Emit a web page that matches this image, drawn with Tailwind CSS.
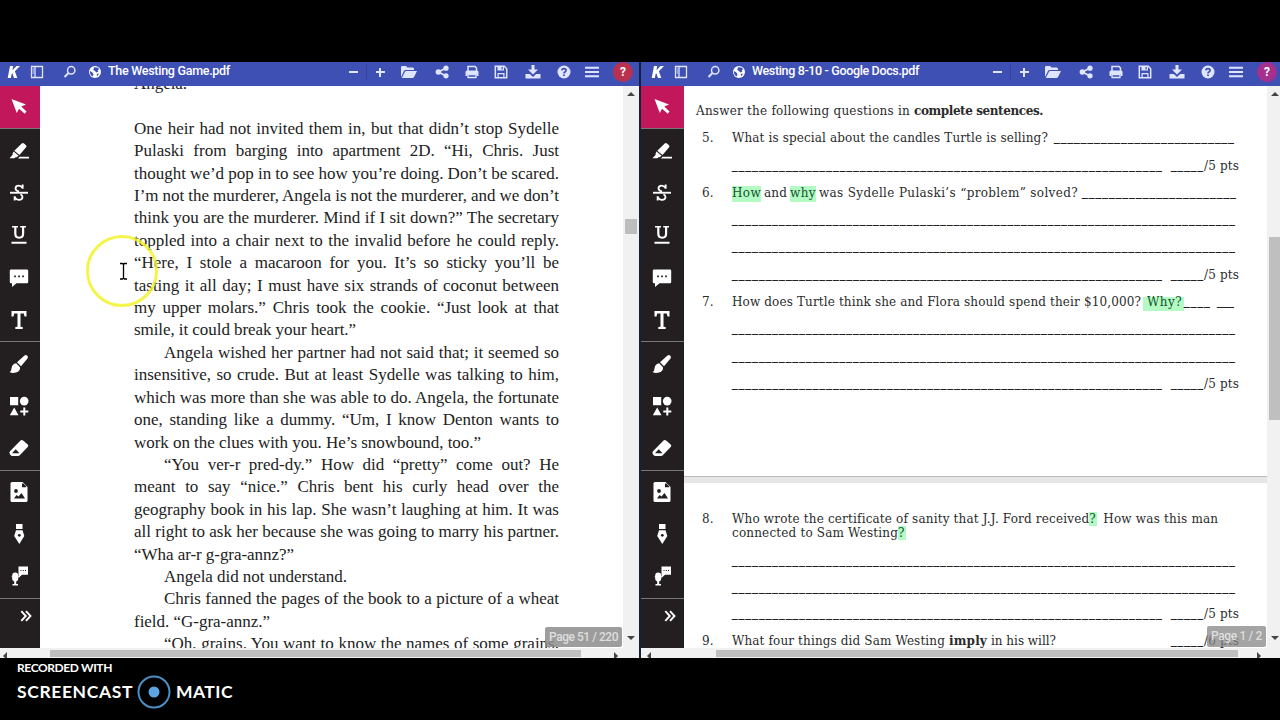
<!DOCTYPE html>
<html lang="en">
<head>
  <meta charset="UTF-8" />
  <meta name="viewport" content="width=device-width, initial-scale=1.0" />
  <title>The Westing Game</title>
  <script src="https://cdn.jsdelivr.net/npm/@tailwindcss/browser@4"></script>
</head>
<body class="bg-black w-[1280px] h-[720px] overflow-hidden relative pt-[62px]">

  <!-- icons used by both viewers -->
  <svg class="hidden">
    <symbol id="i-k" viewBox="0 0 14 14"><path d="M4 1h3.2L6.400 5.200 10.500 1H14L8.900 6.200 11.300 13H8L6.300 8.300 5.600 9 4.900 13H1.700z" /></symbol>
    <symbol id="i-panel" viewBox="0 0 14 14"><path d="M1.500 1.500h11v11h-11zM5 1.500v11" fill="none" stroke="currentColor" stroke-width="1.300" /><path d="M2.500 4h1.500M2.500 6h1.500M2.500 8h1.500" stroke="currentColor" /></symbol>
    <symbol id="i-search" viewBox="0 0 14 14"><circle cx="8.200" cy="5.300" r="3.700" fill="none" stroke="currentColor" stroke-width="1.500" /><path d="M5.500 8L1.500 12" stroke="currentColor" stroke-width="2" /></symbol>
    <symbol id="i-globe" viewBox="0 0 14 14"><circle cx="7" cy="7" r="6" /><path d="M6 2.200l3.300.2 2 1.600-1.600 1.200.6 1.500-2 .8-1.300-1.600L5.300 5zM2 6l2.700 1.700L5.500 10l-1.200 1.600C2.500 10 1.700 8 2 6zM8.500 9l2.500-.5-1.500 2.800z" fill="#3f50b5" /></symbol>
    <symbol id="i-folder" viewBox="0 0 18 14"><path d="M1 12V2.200Q1 1 2.200 1H6l1.500 1.500h5Q14 2.500 14 4v1H5.500Q4.500 5 4 6zM1.800 13L5 6.800Q5.400 6 6.200 6H17l-3 6q-.5 1-1.500 1z" /></symbol>
    <symbol id="i-share" viewBox="0 0 14 14"><path d="M11 3L3.500 7 11 11" fill="none" stroke="currentColor" stroke-width="1.800" /><circle cx="3.300" cy="7" r="2.700" /><circle cx="11" cy="3.200" r="2.600" /><circle cx="11" cy="10.800" r="2.600" /></symbol>
    <symbol id="i-print" viewBox="0 0 14 14"><path d="M3 6V1.500h7L11.500 3v3" fill="none" stroke="currentColor" stroke-width="1.500" /><path d="M2 5.500h10q1.500 0 1.500 1.500v4H11.500V9h-9v2H.5V7Q.5 5.500 2 5.500z" /><path d="M3 9.500h8v3H3z" fill="none" stroke="currentColor" stroke-width="1.300" /></symbol>
    <symbol id="i-save" viewBox="0 0 14 14"><path d="M1.300 1.300h9L12.700 3.700v9H1.300z" fill="none" stroke="currentColor" stroke-width="1.500" /><path d="M3.500 1h6.500v4.500H3.500zM3.500 8h7v5h-1.200V9.200H4.700V13H3.500z" /><path d="M7.500 2h1.200v2.500H7.500z" fill="#3f50b5" /></symbol>
    <symbol id="i-download" viewBox="0 0 16 14"><path d="M6.500 0h3v4.500H13L8 9.500 3 4.500h3.500zM.5 9h4.300L8 12l3.200-3h4.300v4.500H.5z" /></symbol>
    <symbol id="i-help" viewBox="0 0 14 14"><circle cx="7" cy="7" r="6.500" /><path d="M4.900 5.400Q5 3.600 7 3.600t2.100 1.700Q9.100 6.300 8 6.900T7 8.500" fill="none" stroke="#3f50b5" stroke-width="1.700" /><path d="M6.100 9.400h1.800v1.700H6.100z" fill="#3f50b5" /></symbol>
    <symbol id="i-menu" viewBox="0 0 14 12"><path d="M0 .8h14v2H0zM0 5h14v2H0zM0 9.200h14v2H0z" /></symbol>

    <symbol id="t-arrow" viewBox="0 0 20 20"><path d="M2.500 2L17 7.500 12.300 9.500 17.500 14.500 15.800 16.800 10 11.800 7.800 16z" /></symbol>
    <symbol id="t-mark" viewBox="0 0 20 20"><path d="M12.700 2.500q1.200-1 2.300 0l2 1.700q1 1 .1 2.100L10.500 14 5.300 9.700zM4.600 10.500l5 4.200-2 1.600-1.100-.1-1 1H.5l3.200-3.500-.2-1zM10.500 15.700h9.500v1.800h-11z" /></symbol>
    <symbol id="t-strike" viewBox="0 0 20 20"><path d="M13.700 1.500v4.300M13.500 5Q12.300 2.700 9.700 2.700 6.500 2.700 6.500 5.400q0 2 3.500 3.300M5.600 17.500v-4.300M5.800 14Q7 16.800 10 16.800q3.500 0 3.500-2.800 0-1.700-2-2.800" fill="none" stroke="currentColor" stroke-width="1.800" /><path d="M1 8.800h18v1.900H1z" /></symbol>
    <symbol id="t-under" viewBox="0 0 20 20"><path d="M3 1h6v1.600H7.400V8.500q0 3.300 2.800 3.300T13 8.500V2.600h-1.800V1H17v1.600h-1.800v6q0 5.200-5 5.200t-5-5.200v-6H3zM2.500 16.800h15v2h-15z" /></symbol>
    <symbol id="t-note" viewBox="0 0 20 20"><path d="M2 1.500h16q1.200 0 1.200 1.200V14q0 1.200-1.200 1.200H7.500L3 19v-3.800H2Q.8 15.200.8 14V2.700Q.8 1.500 2 1.500z" /><path d="M5.200 7.500h1.700v1.700H5.200zM9.200 7.500h1.700v1.700H9.200zM13.200 7.500h1.700v1.700h-1.700z" fill="#231f20" /></symbol>
    <symbol id="t-text" viewBox="0 0 20 20"><path d="M2.500 1h15v5.500h-2L14.800 3.400h-3.300v13.300l2.200.4V19H6.300v-1.900l2.200-.4V3.400H5.200L4.500 6.500h-2z" /></symbol>
    <symbol id="t-brush" viewBox="0 0 20 20"><path d="M15.500 1.500q1.500-1 2.800.2t.2 2.800L12 12.300 8 8.300zM7.200 9.200l3.800 4q.5 4-4 5.300-3.500 1-6.500-.5 2-1 2-3.500.7-5 4.700-5.300z" /></symbol>
    <symbol id="t-shapes" viewBox="0 0 20 20"><path d="M1 1h8.200v8.200H1zM5.200 11.500l4.300 7.700H.8zM14.300 11.500h2v3h3v2h-3v3h-2v-3h-3v-2h3z" /><circle cx="15.200" cy="5.100" r="4.300" /></symbol>
    <symbol id="t-eraser" viewBox="0 0 20 20"><path d="M11.500 2.500q1.300-1.200 2.600 0l4.600 4q1.300 1.200 0 2.600L11 17q-.8.900-2 .9H3.500Q2.300 17.900 1.500 17L.8 16Q0 14.500 1 13.300z" /><path d="M3 15.200L6.700 11.200 10.500 15.200z" fill="#231f20" /></symbol>
    <symbol id="t-image" viewBox="0 0 20 20"><path d="M3 0h10.500L18.500 5v13.500q0 1.500-1.500 1.500H3q-1.500 0-1.500-1.500v-17Q1.500 0 3 0z" /><path d="M13 1.500v3.800h4.200v-1L14.300 1.500zM5 16.500l2.500-3.500 2 1.500 3-3.500 3.500 5.500z" fill="#231f20" /><circle cx="7" cy="9" r="1.900" fill="#231f20" /></symbol>
    <symbol id="t-pen" viewBox="0 0 20 20"><path d="M7 0h6.500v5H7zM7 6.200h6.500L15.300 12 10.300 20 5.200 12z" /><circle cx="10.300" cy="11.300" r="1.400" fill="#231f20" /></symbol>
    <symbol id="t-voice" viewBox="0 0 20 20"><path d="M9.500.5H19v8.200h-6L9.500 12z" /><rect x="3.200" y="6.500" width="6" height="9" rx="3" /><path d="M2.700 10.200h7v1h-7z" /><path d="M5.200 15h2v3H9v1.500H3.500V18h1.700z" /><path d="M11.500 4h1v1h-1zM13.800 4h1v1h-1zM16 4h1v1h-1z" fill="#231f20" /></symbol>
    <symbol id="t-more" viewBox="0 0 12 12"><path d="M1.300 1.200L5.800 6 1.300 10.800M6 1.200L10.500 6 6 10.800" fill="none" stroke="currentColor" stroke-width="1.900" /></symbol>
  </svg>

  <main class="flex h-[596px] bg-[#14213d]">

    <!-- left viewer: the book -->
    <section class="w-[639px] mr-px flex flex-col relative">
      <header class="h-6 shrink-0 bg-[#3f50b5] pb-1 text-[#dfe5ff]">
        <div class="w-[633px] h-5 flex items-center fill-current" data-header="The Westing Game.pdf" data-title-w="122" data-badge="#b8324f"></div>
      </header>
      <div class="flex h-[562px]">
        <nav class="w-10 shrink-0 bg-[#231f20] text-white flex flex-col" data-rail></nav>
        <div class="flex-1 bg-white overflow-hidden relative">
          <article class="ml-[94px] mt-[-13px] w-[426px] font-['Liberation_Serif',serif] text-[17px] leading-[22.4px] text-[#222] whitespace-nowrap">
            <p><span data-w="53">Angela.</span></p>
            <p>&nbsp;</p>
            <p><span data-w="425" data-by="word">One heir had not invited them in, but that didn’t stop Sydelle</span></p>
            <p><span data-w="425" data-by="word">Pulaski from barging into apartment 2D. “Hi, Chris. Just</span></p>
            <p><span data-w="425" data-by="word">thought we’d pop in to see how you’re doing. Don’t be scared.</span></p>
            <p><span data-w="425" data-by="word">I’m not the murderer, Angela is not the murderer, and we don’t</span></p>
            <p><span data-w="425" data-by="word">think you are the murderer. Mind if I sit down?” The secretary</span></p>
            <p><span data-w="425" data-by="word">toppled into a chair next to the invalid before he could reply.</span></p>
            <p><span data-w="425" data-by="word">“Here, I stole a macaroon for you. It’s so sticky you’ll be</span></p>
            <p><span data-w="425" data-by="word">tasting it all day; I must have six strands of coconut between</span></p>
            <p><span data-w="425" data-by="word">my upper molars.” Chris took the cookie. “Just look at that</span></p>
            <p><span data-w="222">smile, it could break your heart.”</span></p>
            <p class="pl-[30px]"><span data-w="395" data-by="word">Angela wished her partner had not said that; it seemed so</span></p>
            <p><span data-w="425" data-by="word">insensitive, so crude. But at least Sydelle was talking to him,</span></p>
            <p><span data-w="425" data-by="word">which was more than she was able to do. Angela, the fortunate</span></p>
            <p><span data-w="425" data-by="word">one, standing like a dummy. “Um, I know Denton wants to</span></p>
            <p><span data-w="347">work on the clues with you. He’s snowbound, too.”</span></p>
            <p class="pl-[30px]"><span data-w="395" data-by="word">“You ver-r pred-dy.” How did “pretty” come out? He</span></p>
            <p><span data-w="425" data-by="word">meant to say “nice.” Chris bent his curly head over the</span></p>
            <p><span data-w="425" data-by="word">geography book in his lap. She wasn’t laughing at him. It was</span></p>
            <p><span data-w="425" data-by="word">all right to ask her because she was going to marry his partner.</span></p>
            <p><span data-w="160">“Wha ar-r g-gra-annz?”</span></p>
            <p class="pl-[30px]"><span data-w="183">Angela did not understand.</span></p>
            <p class="pl-[30px]"><span data-w="395" data-by="word">Chris fanned the pages of the book to a picture of a wheat</span></p>
            <p><span data-w="136">field. “G-gra-annz.”</span></p>
            <p class="pl-[30px]"><span data-w="395" data-by="word">“Oh, grains. You want to know the names of some grains.</span></p>
          </article>
          <div class="absolute left-[505px] top-[541px] w-[77px] h-5 rounded-xs bg-[#8c8c8c]/85 text-[#dedede] font-['Roboto',sans-serif] font-medium text-[12px] leading-5 pl-1 whitespace-nowrap"><span data-w="69">Page 51 / 220</span></div>
        </div>
        <div class="w-4 bg-[#f1f1f1] flex flex-col items-center pt-1.5">
          <svg class="w-2 h-1" viewBox="0 0 8 4"><path d="M0 4L4 0 8 4z" fill="#444" /></svg>
          <div class="w-3 h-[15px] mt-[123px] bg-[#bdbdbd]"></div>
          <svg class="w-2 h-1 mt-auto mb-2" viewBox="0 0 8 4"><path d="M0 0L4 4 8 0z" fill="#444" /></svg>
        </div>
      </div>
      <div class="h-2.5 bg-[#f1f1f1] flex pt-0.5 pb-px overflow-hidden">
        <svg class="w-1.5 h-2 mt-0.5 ml-0.5" viewBox="0 0 6 8"><path d="M5 0v8L1 4z" fill="#444" /></svg>
        <div class="ml-[42px] w-[531px] bg-[#bfbfbf]"></div>
        <svg class="w-1.5 h-2 mt-0.5 ml-8" viewBox="0 0 6 8"><path d="M1 0v8l4-4z" fill="#444" /></svg>
      </div>

      <!-- pointer highlight -->
      <svg class="absolute left-[86px] top-[173px] w-[72px] h-[72px]" viewBox="0 0 72 72" fill="none">
        <circle cx="36" cy="36" r="34.500" stroke="#f2f22c" stroke-opacity=".85" stroke-width="3" />
        <path d="M34 28.500h2.500l1 1 1-1H41M37.500 29v14.500M34 44h2.500l1-1 1 1H41" stroke="#000" stroke-width="1.300" />
      </svg>
    </section>

    <!-- right viewer: the worksheet -->
    <section class="w-[640px] pl-px flex flex-col">
      <header class="h-6 shrink-0 bg-[#3f50b5] pb-1 pl-[3px] text-[#dfe5ff]">
        <div class="w-[633px] h-5 flex items-center fill-current" data-header="Westing 8-10 - Google Docs.pdf" data-title-w="167" data-badge="#a5308f"></div>
      </header>
      <div class="flex h-[562px]">
        <nav class="w-[43px] shrink-0 bg-[#231f20] text-white flex flex-col" data-rail></nav>
        <div class="flex-1 bg-white overflow-hidden relative font-['DejaVu_Serif',serif] text-[12px] text-[#2b2b2b] whitespace-nowrap [&_i]:not-italic [&_i]:text-[11px] [&_i]:text-black [&_i]:-mt-px [&_i]:[-webkit-text-stroke:0.4px_#222]">
          <div class="h-[391px] pt-3 border-b border-[#bbb] leading-[27.3px] [&>div]:flex [&>div]:h-[27.3px] [&>div]:pl-12">
            <div class="-ml-9"><span data-w="214">Answer the following questions in</span><span data-w="129" class="ml-1 font-bold">complete sentences.</span></div>
            <div><b class="font-normal -ml-[30px] w-[30px]">5.</b><span data-w="316">What is special about the candles Turtle is selling?</span><i class="ml-1.5" data-w="181" data-blanks="27"></i></div>
            <div><i data-w="431" data-blanks="64"></i><i class="ml-2" data-w="33" data-blanks="5"></i><span data-w="35">/5 pts</span></div>
            <div><b class="font-normal -ml-[30px] w-[30px]">6.</b><span class="bg-[#b4fac4] text-[#14532d] h-4 leading-[14px] mt-[6px]" data-w="29">How</span><span class="ml-[3px]" data-w="23">and</span><span class="ml-[3px] bg-[#b4fac4] text-[#14532d] h-4 leading-[14px] mt-[6px]" data-w="26">why</span><span class="ml-[3px]" data-w="259">was Sydelle Pulaski’s “problem” solved?</span><i class="ml-1" data-w="155" data-blanks="23"></i></div>
            <div><i data-w="504" data-blanks="75"></i></div>
            <div><i data-w="504" data-blanks="75"></i></div>
            <div><i data-w="431" data-blanks="64"></i><i class="ml-2" data-w="33" data-blanks="5"></i><span data-w="35">/5 pts</span></div>
            <div><b class="font-normal -ml-[30px] w-[30px]">7.</b><span data-w="409">How does Turtle think she and Flora should spend their $10,000?</span><span class="ml-0.5 bg-[#b4fac4] text-[#14532d] h-[14px] leading-[10px] mt-2 pl-1 pr-0.5" data-w="35">Why?</span><i data-w="27" data-blanks="4"></i><i class="ml-1.5" data-w="17" data-blanks="3"></i></div>
            <div><i data-w="504" data-blanks="75"></i></div>
            <div><i data-w="504" data-blanks="75"></i></div>
            <div><i data-w="431" data-blanks="64"></i><i class="ml-2" data-w="33" data-blanks="5"></i><span data-w="35">/5 pts</span></div>
          </div>
          <div class="h-1.5 bg-[#e6e6e6]"></div>
          <div class="pt-[29px] leading-[27px] [&>div]:flex [&>div]:pl-12">
            <div class="h-[14px] leading-[14px]"><b class="font-normal -ml-[30px] w-[30px]">8.</b><span data-w="357">Who wrote the certificate of sanity that J.J. Ford received</span><span class="bg-[#b4fac4] text-[#14532d]" data-w="8">?</span><span class="ml-1.5" data-w="115">How was this man</span></div>
            <div class="h-[14px] leading-[14px]"><span data-w="166">connected to Sam Westing</span><span class="bg-[#b4fac4] text-[#14532d]" data-w="8">?</span></div>
            <div class="mt-[8px] h-[26.6px]"><i data-w="504" data-blanks="75"></i></div>
            <div class="h-[26.6px]"><i data-w="504" data-blanks="75"></i></div>
            <div class="h-[26.6px]"><i data-w="431" data-blanks="64"></i><i class="ml-2" data-w="33" data-blanks="5"></i><span data-w="35">/5 pts</span></div>
            <div class="h-[26.6px]"><b class="font-normal -ml-[30px] w-[30px]">9.</b><span data-w="213">What four things did Sam Westing</span><span class="ml-1 font-bold" data-w="38">imply</span><span class="ml-1" data-w="65">in his will?</span><i class="ml-[115px]" data-w="33" data-blanks="5"></i><span data-w="35">/6 pts</span></div>
          </div>
          <div class="absolute left-[523px] top-[540px] w-[59px] h-[21px] rounded-xs bg-[#858585]/75 text-[#dedede] font-['Roboto',sans-serif] font-medium text-[12px] leading-[21px] pl-1"><span data-w="51">Page 1 / 2</span></div>
        </div>
        <div class="w-[13px] bg-[#f1f1f1] flex flex-col items-end pt-1.5">
          <svg class="w-2 h-1 mr-px" viewBox="0 0 8 4"><path d="M0 4L4 0 8 4z" fill="#444" /></svg>
          <div class="w-[11px] h-[183px] mt-[141px] bg-[#bfbfbf]"></div>
          <svg class="w-2 h-1 mt-auto mb-2 mr-px" viewBox="0 0 8 4"><path d="M0 0L4 4 8 0z" fill="#444" /></svg>
        </div>
      </div>
      <div class="h-2.5 bg-[#f1f1f1] flex pt-0.5 pb-px overflow-hidden">
        <svg class="w-1.5 h-2 mt-0.5 ml-[5px]" viewBox="0 0 6 8"><path d="M5 0v8L1 4z" fill="#444" /></svg>
        <div class="ml-16 w-[522px] bg-[#bfbfbf]"></div>
        <svg class="w-1.5 h-2 mt-0.5 ml-[18px]" viewBox="0 0 6 8"><path d="M1 0v8l4-4z" fill="#444" /></svg>
      </div>
    </section>
  </main>

  <!-- recorder watermark -->
  <footer class="h-[62px] pl-[17px] pt-1 text-white font-['Lato','Open_Sans',sans-serif] font-bold whitespace-nowrap">
    <div class="text-[12px] leading-3"><span data-w="95">RECORDED WITH</span></div>
    <div class="flex items-center h-9 text-[17.5px]">
      <span data-w="116">SCREENCAST</span>
      <svg class="w-[34px] h-[34px] ml-1 mr-[5px]" viewBox="0 0 34 34"><circle cx="17" cy="17" r="15.500" fill="none" stroke="#4b8fc4" stroke-width="2" /><circle cx="17" cy="17" r="5.500" fill="#5ca5e0" /></svg>
      <span data-w="57">MATIC</span>
    </div>
  </footer>

  <script>
    // header buttons
    document.querySelectorAll('[data-header]').forEach(el => {
      const icon = (name, cell, size) =>
        `<span class="${cell} flex justify-center shrink-0"><svg class="${size}"><use href="#i-${name}" /></svg></span>`;
      el.innerHTML =
        icon('k', 'w-[26px] text-white', 'w-3.5 h-3.5') +
        icon('panel', 'w-[22px]', 'w-3.5 h-3.5') +
        icon('search', 'w-9 ml-1', 'w-3.5 h-3.5') +
        icon('globe', 'w-3.5 text-white', 'w-3.5 h-3.5') +
        `<span class="ml-1.5 text-white font-['Roboto',sans-serif] font-medium text-[12.5px] leading-[18px] pb-0.5 whitespace-nowrap" data-w="${el.dataset.titleW}">${el.dataset.header}</span>` +
        `<span class="ml-auto w-[26px] h-3.5 border-r border-[#33429c] flex items-center justify-center"><b class="w-[9px] h-[1.5px] bg-current"></b></span>` +
        `<span class="w-[26px] h-3.5 flex items-center justify-center relative"><b class="w-[9px] h-[1.5px] bg-current"></b><b class="w-[1.5px] h-[9px] bg-current absolute"></b></span>` +
        icon('folder', 'w-8', 'w-[18px] h-3.5') +
        icon('share', 'w-[34px]', 'w-3.5 h-3.5') +
        icon('print', 'w-[26px]', 'w-3.5 h-3.5') +
        icon('save', 'w-8', 'w-3.5 h-3.5') +
        icon('download', 'w-8', 'w-4 h-3.5') +
        icon('help', 'w-[29px]', 'w-3.5 h-3.5') +
        icon('menu', 'w-7', 'w-3.5 h-3') +
        `<span class="ml-[7px] w-5 h-5 rounded-full text-white font-['Roboto',sans-serif] font-bold text-[12px] leading-5 text-center shrink-0" style="background:${el.dataset.badge}">?</span>`;
    });

    // tool rail, one array per group
    const groups = [
      ['arrow'],
      ['mark', 'strike', 'under', 'note', 'text'],
      ['brush', 'shapes', 'eraser'],
      ['image', 'pen', 'voice']
    ];
    document.querySelectorAll('[data-rail]').forEach(el => {
      el.innerHTML = groups.map((g, i) =>
        `<div class="border-b border-[#777] ${i === 0 ? 'bg-[#c2185b]' : ''}">` +
        g.map(n => `<div class="h-[42.4px] flex items-center justify-center pr-[2px]"><svg class="w-5 h-5 fill-current"><use href="#t-${n}" /></svg></div>`).join('') +
        `</div>`).join('') +
        `<div class="flex justify-end pt-[11px] pr-2"><svg class="w-3 h-3"><use href="#t-more" /></svg></div>`;
    });

    // answer blanks
    document.querySelectorAll('[data-blanks]').forEach(el => {
      el.textContent = '_'.repeat(el.dataset.blanks);
    });

    // stretch each run of text to its measured width
    function fitText() {
      document.querySelectorAll('[data-w]').forEach(el => {
        el.style.wordSpacing = el.style.letterSpacing = '0px';
        const range = document.createRange();
        range.selectNodeContents(el);
        const diff = el.dataset.w - range.getBoundingClientRect().width;
        const text = el.textContent;
        if (el.dataset.by === 'word') el.style.wordSpacing = diff / (text.split(' ').length - 1) + 'px';
        else el.style.letterSpacing = diff / text.length + 'px';
      });
    }
    fitText();
    window.addEventListener('load', () => {
      fitText();
      requestAnimationFrame(fitText);
      document.fonts.ready.then(fitText);
    });
  </script>
</body>
</html>
